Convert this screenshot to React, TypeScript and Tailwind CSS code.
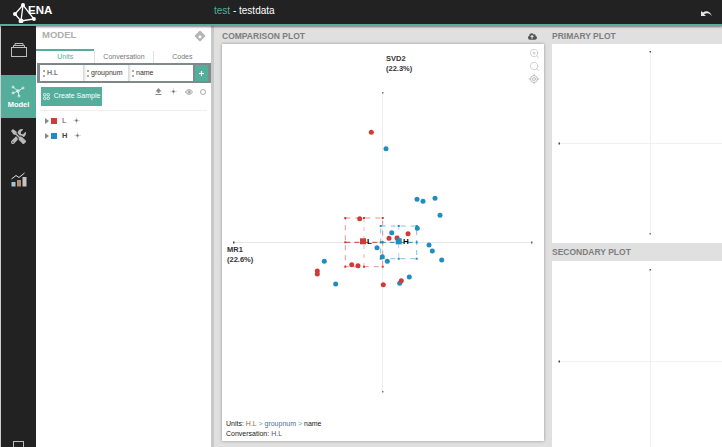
import { ZoomIn, Search, Eye, Plus, LocateFixed } from 'lucide-react';
import { FaTools, FaCloudUploadAlt } from 'react-icons/fa';

const bluePoints = [
  [417, 199.3], [423, 201.3], [435, 198.3], [440, 215.3], [417.3, 228.3], [391.7, 232.7], [377, 247.7],
  [429, 245], [432.3, 251], [441.7, 260], [382.3, 256.7], [387.3, 261.3], [324.3, 261.3], [335.7, 284],
  [409.3, 277], [399.7, 283.3], [386, 148.7],
];
const redPoints = [
  [359.7, 218.7], [408, 233.7], [389, 238.3], [397, 238], [351.7, 264.7], [358, 265.7], [317.3, 271],
  [317.3, 274], [401.3, 280.7], [383.3, 284.7], [371.3, 132.3],
];

function Dot({ x, y, fill }: { x: number; y: number; fill: string }) {
  return <circle cx={x - 222} cy={y - 44} r="2.5" fill={fill} />;
}

function ConfBox({ x1, x2, y1, y2, cx, cy, color }: { x1: number; x2: number; y1: number; y2: number; cx: number; cy: number; color: string }) {
  const ends = [[x1, y1], [cx, y1], [x2, y1], [x1, cy], [x2, cy], [x1, y2], [cx, y2], [x2, y2]];
  return (
    <g>
      <rect x={x1} y={y1} width={x2 - x1} height={y2 - y1} fill="none" stroke={color} strokeWidth="1" strokeDasharray="5 5" opacity="0.55" />
      <line x1={cx} y1={y1} x2={cx} y2={y2} stroke={color} strokeDasharray="4 5" opacity="0.35" />
      <line x1={x1} y1={cy} x2={x2} y2={cy} stroke={color} strokeDasharray="5 4" />
      {ends.map(([x, y], i) => (
        <rect key={i} x={x - 1} y={y - 1} width="2" height="2" fill={color} />
      ))}
    </g>
  );
}

function SmallPlot({ top, bottom, axis }: { top: number; bottom: number; axis: number }) {
  return (
    <svg className="absolute inset-0 w-full h-full">
      <line x1="7" y1={axis + 0.5} x2="170" y2={axis + 0.5} stroke="#f0f0f0" />
      <line x1="98.500" y1={top} x2="98.500" y2={bottom} stroke="#f0f0f0" />
      <rect x="97.500" y={top - 1} width="1.500" height="1.500" fill="#555" />
      <rect x="97.500" y={bottom - 1} width="1.500" height="1.500" fill="#777" />
      <rect x="6.500" y={axis - 0.5} width="1.500" height="2" fill="#444" />
    </svg>
  );
}

function Crosshair() {
  return (
    <svg width="9" height="9" viewBox="0 0 9 9">
      <path d="M4.500 1v7M1 4.500h7" stroke="#dddddd" strokeWidth="1" />
      <rect x="3.500" y="3.500" width="2" height="2" fill="#666" />
    </svg>
  );
}

function Grip() {
  return <span className="w-[2px] h-[7px] shrink-0 border-l-2 border-dotted border-[#aaaaaa] mr-[2px]" />;
}

export default function App() {
  return (
    <div className="h-screen overflow-hidden flex flex-col bg-[#e0e0e0] font-['Liberation_Sans',Arial,sans-serif]">
      {/* top bar */}
      <header className="h-[26px] shrink-0 bg-[#222222] border-b-2 border-[#55ae9b] relative flex items-center pl-[13px] shadow-[0_1px_2px_rgba(0,0,0,0.5)] z-10">
        <svg width="24" height="22" viewBox="0 0 24 22" className="shrink-0">
          <path d="M10 4 2 13l6 7 13-2Zm0 0-2 16" fill="none" stroke="#fff" strokeWidth="1.300" />
          <circle cx="10" cy="4" r="2" fill="#fff" />
          <circle cx="2" cy="13" r="2" fill="#fff" />
          <circle cx="8" cy="20" r="2.400" fill="#fff" />
          <circle cx="21" cy="18" r="1.900" fill="#fff" />
        </svg>
        <span className="text-white font-bold text-[11.500px] ml-[-9px] mt-[-3px]">ENA</span>
        <div className="absolute left-[214px] top-[4px] text-[10px] leading-[14px] text-white">
          <span className="text-[#55ae9b]">test</span> - testdata
        </div>
        <svg className="absolute right-[9px] top-[10px]" width="13" height="7" viewBox="0 0 13 7">
          <path d="M1 1v5h5L4 4.200C7 2.400 10 3 12 6.500 11 2 6.500 -.5 3 2.500Z" fill="#e6e6e6" />
        </svg>
      </header>

      <div className="flex-1 min-h-0 flex">
        {/* icon rail */}
        <nav className="w-[36px] shrink-0 bg-[#222222] border-l border-[#cfcfcf] flex flex-col items-center text-[#cfcfcf]">
          <div className="h-[49px] w-full shrink-0 flex items-center justify-center pb-[2px]">
            <svg width="16" height="14" viewBox="0 0 16 14" fill="none" stroke="#bdbdbd" strokeWidth="1">
              <rect x="0.500" y="4.500" width="15" height="9" />
              <path d="M2.500 4.500v-2h11v2M4 2.500v-2h8v2" />
            </svg>
          </div>
          <div className="h-[43px] w-full shrink-0 bg-[#55ae9b] flex flex-col items-center justify-center text-white">
            <svg width="15" height="15" viewBox="0 0 15 15" fill="none" stroke="#fff" strokeWidth="0.700">
              <path d="M7 7 2 3M7 7l5-3M7 7 2 9M7 7l1 5" />
              <circle cx="7" cy="7" r="1.300" />
              <circle cx="2" cy="3" r="1" />
              <circle cx="12" cy="4" r="1" />
              <circle cx="2" cy="9" r="1" />
              <circle cx="8" cy="12" r="1" />
            </svg>
            <span className="text-[7.500px] font-bold leading-[9px] mt-[1px]">Model</span>
          </div>
          <div className="h-[38px] w-full shrink-0 flex items-center justify-center pb-[2px]">
            <FaTools size={15} color="#b8b8b8" />
          </div>
          <div className="h-[46px] w-full shrink-0 flex items-center justify-center">
            <svg width="16" height="15" viewBox="0 0 16 15">
              <rect x="0.500" y="10" width="4" height="4.500" fill="#9fc7d8" />
              <rect x="6" y="8" width="4" height="6.500" fill="#b98b75" />
              <rect x="11.500" y="5" width="4" height="9.500" fill="#c4c4c4" />
              <path d="M.5 7 5 3.500 8 5.500 13.500 1" fill="none" stroke="#e0e0e0" strokeWidth="1" />
            </svg>
          </div>
          <div className="mt-auto h-[6px] w-full flex justify-center overflow-hidden">
            <div className="w-[11px] h-[11px] border border-[#bdbdbd]" />
          </div>
        </nav>

        {/* model panel */}
        <aside className="w-[175px] shrink-0 bg-white flex flex-col">
          <div className="h-[23px] shrink-0 pl-[6px] pr-[7px] pb-[4px] flex items-center justify-between">
            <span className="text-[9.500px] font-bold text-[#aeaeae]">MODEL</span>
            <div className="w-[8px] h-[8px] bg-[#b5b5b5] rotate-45 rounded-[1px] flex items-center justify-center">
              <div className="w-[3px] h-[3px] bg-white -rotate-45 rounded-full" />
            </div>
          </div>
          <div className="h-[14px] shrink-0 grid grid-cols-3 text-[7px] text-[#777] leading-[11px] text-center">
            <div className="border-t-2 border-[#55ae9b] text-[#55ae9b]">Units</div>
            <div className="mt-[2px] border-l border-[#e2e2e2]">Conversation</div>
            <div className="mt-[2px] border-l border-[#e2e2e2]">Codes</div>
          </div>
          <div className="h-[20px] shrink-0 ml-[1px] bg-[#7f8b8b] flex items-center px-[3px] gap-[2px] text-[7px] text-[#333]">
            <div className="w-[153px] h-[16px] bg-white flex items-center">
              <div className="w-[44px] h-[16px] pl-[3px] flex items-center border-r border-[#ddd] shadow-[1px_0_2px_rgba(0,0,0,0.15)]">
                <Grip />H.L
              </div>
              <div className="w-[45px] h-[16px] pl-[3px] flex items-center border-r border-[#ddd] shadow-[1px_0_2px_rgba(0,0,0,0.15)]">
                <Grip />groupnum
              </div>
              <div className="pl-[3px] flex items-center">
                <Grip />name
              </div>
            </div>
            <div className="w-[13px] h-[16px] bg-[#55ae9b] flex items-center justify-center">
              <Plus size={7} color="#fff" strokeWidth={4} />
            </div>
          </div>
          <div className="h-[28px] shrink-0 mx-[4px] flex items-end justify-between border-b border-[#eeeeee] pb-[4px]">
            <button className="w-[61px] h-[19px] ml-[1px] bg-[#55ae9b] text-white text-[7px] whitespace-nowrap flex items-center justify-center gap-[4px]">
              <svg width="7" height="7" viewBox="0 0 7 7" fill="none" stroke="#fff" strokeWidth="0.800" className="shrink-0">
                <circle cx="1.700" cy="1.700" r="1.300" />
                <circle cx="5.300" cy="1.700" r="1.300" />
                <circle cx="1.700" cy="5.300" r="1.300" />
                <circle cx="5.300" cy="5.300" r="1.300" />
              </svg>
              Create Sample
            </button>
            <div className="flex items-center gap-[7px] text-[#888] pb-[10px] pr-[1px]">
              <svg width="7" height="7" viewBox="0 0 7 7" fill="#888">
                <path d="M3.500 0 6.500 3.500H4.500V5H2.500V3.500H.5Z" />
                <rect x="0.500" y="6" width="6" height="1" />
              </svg>
              <Crosshair />
              <Eye size={8} strokeWidth={2.500} />
              <div className="w-[6px] h-[6px] rounded-full border border-[#aaaaaa]" />
            </div>
          </div>
          <div className="pl-[9px] pt-[2px] text-[7.500px] font-bold text-[#444]">
            <div className="h-[15px] flex items-center">
              <span className="w-0 h-0 border-y-[3px] border-y-transparent border-l-[4px] border-l-[#888]" />
              <span className="w-[6px] h-[6px] bg-[#d13a36] ml-[2px]" />
              <span className="ml-[5px] w-[10px] text-[#888]">L</span>
              <Crosshair />
            </div>
            <div className="h-[15px] flex items-center">
              <span className="w-0 h-0 border-y-[3px] border-y-transparent border-l-[4px] border-l-[#888]" />
              <span className="w-[6px] h-[6px] bg-[#1f8dc1] ml-[2px]" />
              <span className="ml-[5px] w-[11px]">H</span>
              <Crosshair />
            </div>
          </div>
        </aside>
        <div className="w-[3px] shrink-0 bg-[#c8c8c8]" />

        {/* comparison plot */}
        <section className="w-[330px] shrink-0 pl-[8px] flex flex-col">
          <div className="h-[18px] shrink-0 flex items-center justify-between pr-[7px] pt-[2px] text-[8.500px] font-bold text-[#7d7d7d]">
            <span>COMPARISON PLOT</span>
            <FaCloudUploadAlt size={9} color="#555" />
          </div>
          <div className="w-[322px] h-[397px] bg-white shadow-[0_0_3px_rgba(0,0,0,0.35)] relative">
            <svg className="absolute inset-0 w-full h-full">
              <line x1="160.500" y1="49" x2="160.500" y2="348" stroke="#eeeeee" />
              <line x1="11" y1="198.500" x2="310" y2="198.500" stroke="#e6e6e6" />
              <rect x="160" y="48" width="1.500" height="1.500" fill="#777" />
              <rect x="160" y="347" width="1.500" height="1.500" fill="#777" />
              <rect x="11" y="197.500" width="1.500" height="2" fill="#444" />
              <rect x="309" y="197.500" width="1.500" height="2" fill="#666" />
              <g transform="translate(-222 -44)">
                <ConfBox x1={345.3} x2={382.7} y1={218} y2={266.7} cx={364} cy={242.3} color="#d13a36" />
                <ConfBox x1={380.7} x2={416.7} y1={226} y2={258.7} cx={398.7} cy={242.3} color="#1f8dc1" />
              </g>
              {bluePoints.map(([x, y], i) => (
                <Dot key={i} x={x} y={y} fill="#1f8dc1" />
              ))}
              {redPoints.map(([x, y], i) => (
                <Dot key={i} x={x} y={y} fill="#d13a36" />
              ))}
              <rect x="138" y="194.300" width="6" height="6" fill="#d13a36" />
              <rect x="173.700" y="194.300" width="6" height="6" fill="#1f8dc1" />
            </svg>
            <span className="absolute left-[145px] top-[193px] text-[8px] leading-[10px] font-bold text-black">L</span>
            <span className="absolute left-[181px] top-[193px] text-[8px] leading-[10px] font-bold text-black">H</span>
            <div className="absolute left-[164px] top-[10px] text-[7.500px] leading-[9.500px] font-bold text-[#333]">
              SVD2
              <br />
              (22.3%)
            </div>
            <div className="absolute left-[5px] top-[201px] text-[7.500px] leading-[9.500px] font-bold text-[#333]">
              MR1
              <br />
              (22.6%)
            </div>
            <div className="absolute right-[4px] top-[4px] flex flex-col items-center gap-[1.500px] text-[#bdbdbd]">
              <ZoomIn size={11} strokeWidth={1.500} />
              <Search size={11} strokeWidth={1.500} />
              <LocateFixed size={12} strokeWidth={2} />
            </div>
            <div className="absolute left-[4px] bottom-[2px] text-[7px] leading-[10px] text-[#222]">
              <div>
                Units: <span className="text-[#8a6d3b]">H.L</span> <span className="text-[#55ae9b]">&gt;</span>{' '}
                <span className="text-[#4a6d9b]">groupnum</span> <span className="text-[#55ae9b]">&gt;</span> name
              </div>
              <div>
                Conversation: <span className="text-[#555]">H.L</span>
              </div>
            </div>
          </div>
        </section>

        {/* side plots */}
        <section className="flex-1 min-w-0 ml-[8px] flex flex-col">
          <div className="h-[18px] shrink-0 flex items-center pt-[2px] text-[8.500px] font-bold text-[#7d7d7d]">PRIMARY PLOT</div>
          <div className="h-[199px] shrink-0 bg-white relative">
            <SmallPlot top={8} bottom={190} axis={99} />
          </div>
          <div className="h-[18px] shrink-0 flex items-center pt-[1px] text-[8.500px] font-bold text-[#7d7d7d]">SECONDARY PLOT</div>
          <div className="flex-1 min-h-0 bg-white relative overflow-hidden">
            <SmallPlot top={9} bottom={190} axis={100} />
          </div>
        </section>
      </div>
    </div>
  );
}
